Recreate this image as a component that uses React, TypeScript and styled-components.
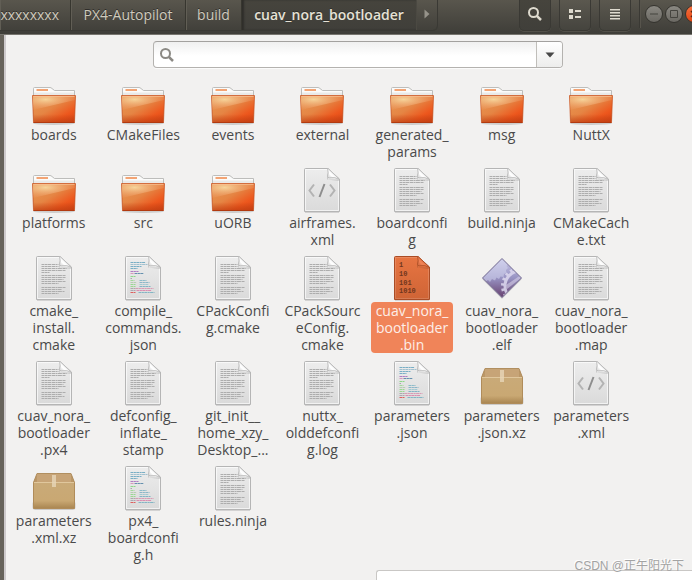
import React from "react";
import styled, { createGlobalStyle, css } from "styled-components";

const GlobalStyle = createGlobalStyle`
  * { box-sizing: border-box; }
  body {
    margin: 0;
    overflow: hidden;
    font-family: "Open Sans", "Noto Sans", sans-serif;
    font-size: 14px;
    color: #4a4a4a;
  }
  button { font: inherit; color: inherit; border: 0; background: none; padding: 0; }
`;

const Window = styled.div`
  min-height: 100vh;
  display: flex;
  flex-direction: column;
  position: relative;
  overflow: hidden;
  background: #f2f1f0;
`;

const HeaderBar = styled.header`
  height: 35px;
  display: flex;
  align-items: flex-start;
  overflow: hidden;
  background: linear-gradient(#59564d, #3f3e39 33px);
  border-bottom: 1px solid #77756f;
`;

const PathBar = styled.nav`
  display: flex;
  height: 31px;
  border-bottom: 1px solid #3a3934;
  border-radius: 0 0 5px 0;
  flex: none;
`;

const Crumb = styled.button<{ $active?: boolean; $width: number }>`
  width: ${(p) => p.$width}px;
  height: 30px;
  padding-bottom: 2px;
  display: flex;
  align-items: center;
  justify-content: center;
  white-space: nowrap;
  color: #cfcabd;
  text-shadow: 0 -1px #2e2d2a;
  border-right: 1px solid #37362f;
  box-shadow: inset 1px 0 #615e55;
  ${(p) =>
    p.$active &&
    css`
      color: #e6e2d6;
      font-weight: 600;
      background: linear-gradient(#46443d, #403f3a);
      border-right-color: #4b4942;
      box-shadow: inset 2px 0 2px #2f2e2a;
    `}
`;

const CrumbTail = styled(Crumb)`
  justify-content: flex-end;
  padding-right: 11px;
`;

const CrumbNext = styled.button`
  width: 21px;
  height: 30px;
  padding-bottom: 2px;
  display: flex;
  align-items: center;
  justify-content: center;
  border-right: 1px solid #3a3934;
  border-radius: 0 0 5px 0;
`;

const Tools = styled.div`
  flex: none;
  display: flex;
  gap: 8px;
  margin-left: auto;
`;

const ToolButton = styled.button<{ $pressed?: boolean }>`
  width: 32px;
  height: 31px;
  display: flex;
  align-items: center;
  justify-content: center;
  padding-bottom: 3px;
  border: 1px solid #3a3934;
  border-top: 0;
  border-radius: 0 0 5px 5px;
  background: ${(p) =>
    p.$pressed ? "linear-gradient(#46443d, #403f3a)" : "linear-gradient(#5b584f, #45443e)"};
  box-shadow: 0 1px #53514a;
`;

const WindowControls = styled.div`
  flex: none;
  display: flex;
  gap: 2px;
  height: 28px;
  align-items: center;
  margin-left: 8px;
  margin-right: -11px;
  padding-left: 5px;
  border-left: 1px solid #3a3934;
  box-shadow: inset 1px 0 #57544c;
`;

const ControlButton = styled.button<{ $close?: boolean }>`
  width: 18px;
  height: 18px;
  display: flex;
  align-items: center;
  justify-content: center;
  border: 1px solid #35342f;
  border-radius: 50%;
  background: ${(p) =>
    p.$close ? "linear-gradient(#f6703f, #de4513)" : "linear-gradient(#8a8882, #6b6963)"};
`;

const Content = styled.main`
  flex: 1;
  border-left: 4px solid #66625a;
  box-shadow: inset 2px 0 #cdc9cb;
  padding: 6px 56px 8px 5px;
`;

const SearchForm = styled.form`
  display: flex;
  height: 27px;
  margin: 0 73px 10px 144px;
  border: 1px solid #b4b2af;
  border-top-color: #a3a19f;
  border-radius: 4px;
  background: linear-gradient(#f0f0f0, #ffffff 14px);
  box-shadow: 0 1px #fbfbfb;
  overflow: hidden;
`;

const SearchLabel = styled.label`
  flex: 1;
  display: flex;
  align-items: center;
  gap: 6px;
  padding-left: 5px;
`;

const SearchInput = styled.input`
  flex: 1;
  min-width: 0;
  border: 0;
  outline: 0;
  background: transparent;
  font: inherit;
`;

const SearchMenu = styled.button`
  width: 26px;
  display: flex;
  align-items: center;
  justify-content: center;
  border-left: 1px solid #c0beba;
  background: linear-gradient(#ffffff, #ededec);
`;

const FileGrid = styled.ul`
  list-style: none;
  margin: 0;
  padding: 0;
  display: grid;
  grid-template-columns: repeat(7, minmax(0, 1fr));
  row-gap: 6px;
`;

const FileCell = styled.li`
  display: flex;
  justify-content: center;
`;

const FileButton = styled.button`
  width: 82px;
  min-height: 82px;
  display: flex;
  flex-direction: column;
  align-items: center;
  justify-content: flex-start;
  svg { display: block; flex: none; }
`;

const FileName = styled.span<{ $selected?: boolean }>`
  width: 82px;
  line-height: 17px;
  white-space: pre;
  text-align: center;
  display: flex;
  justify-content: center;
  ${(p) =>
    p.$selected &&
    css`
      color: #fdeee8;
      background: #f08459;
      border-radius: 4px;
    `}
`;

const StatusPopup = styled.div`
  position: absolute;
  right: 0;
  bottom: 0;
  width: 316px;
  height: 10px;
  background: #ffffff;
  border: 1px solid #c9c7c5;
  border-width: 1px 0 0 1px;
  border-radius: 3px 0 0 0;
`;

const Watermark = styled.div`
  position: absolute;
  right: 8px;
  bottom: 5px;
  font-family: "Liberation Sans", "Noto Sans CJK SC", sans-serif;
  font-size: 12px;
  line-height: 18px;
  color: #a3a3a3;
  text-shadow: -1px -1px #ffffff;
`;

type Kind = "folder" | "text" | "code" | "xml" | "bin" | "elf" | "package";

const PAGE = "M7.5 2.5H30L41.5 13V45.5H6.5V3.5Q6.5 2.5 7.5 2.5Z";

function FolderIcon() {
  const id = React.useId();
  return (
    <svg width="48" height="48" viewBox="0 0 48 48" aria-hidden="true">
      <defs>
        <linearGradient id={id + "a"} x1="0" y1="0" x2="1" y2="1">
          <stop offset="0" stopColor="#e89a54" />
          <stop offset="0.45" stopColor="#e58544" />
          <stop offset="0.75" stopColor="#ed571d" />
          <stop offset="1" stopColor="#d54415" />
        </linearGradient>
        <radialGradient id={id + "b"} cx="0.3" cy="0.25" r="0.75">
          <stop offset="0" stopColor="#f6d49a" />
          <stop offset="1" stopColor="#f0a070" stopOpacity="0.15" />
        </radialGradient>
        <linearGradient id={id + "c"} x1="0" y1="0" x2="0" y2="1">
          <stop offset="0.7" stopColor="#b93c10" stopOpacity="0" />
          <stop offset="1" stopColor="#b93c10" stopOpacity="0.6" />
        </linearGradient>
      </defs>
      <ellipse cx="24" cy="45.5" rx="21" ry="1.5" fill="#000" opacity="0.15" />
      <path d="M3.5 43V10.5Q3.5 9.5 4.5 9.5H20Q21 9.5 22 10.5L24.5 12.5H44.5V43Z" fill="#fbfbfa" stroke="#bdbdbb" />
      <path d="M4 14.5H44V17H4Z" fill="#e2e2e0" opacity="0.7" />
      <path d="M6.5 12H18" stroke="#f3a474" strokeWidth="2" />
      <path d="M2.5 17.5H45.5L44.5 44.5H3.5Z" fill={`url(#${id}a)`} stroke="#c8511f" strokeOpacity="0.75" />
      <path d="M3 18H45L44.8 22L3 32Z" fill={`url(#${id}b)`} />
      <path d="M3 18H45L44 44H4Z" fill={`url(#${id}c)`} />
      <path d="M3.5 18.5H44.5" stroke="#f9c193" strokeOpacity="0.7" />
      <path d="M3.5 44.5H44.5" stroke="#b23a10" />
    </svg>
  );
}

function Page({ tint, children }: { tint?: boolean; children: React.ReactNode }) {
  const id = React.useId();
  return (
    <svg width="48" height="48" viewBox="0 0 48 48" aria-hidden="true">
      <defs>
        <linearGradient id={id + "p"} x1="0" y1="0" x2="0" y2="1">
          <stop offset="0" stopColor={tint ? "#e77542" : "#ededed"} />
          <stop offset="1" stopColor={tint ? "#cf6436" : "#dadada"} />
        </linearGradient>
        <linearGradient id={id + "f"} x1="0" y1="1" x2="1" y2="0">
          <stop offset="0" stopColor={tint ? "#b8562d" : "#bdbdbd"} />
          <stop offset="0.35" stopColor={tint ? "#f08355" : "#ffffff"} />
          <stop offset="1" stopColor={tint ? "#d96939" : "#e4e4e4"} />
        </linearGradient>
      </defs>
      <path d="M7 46.5H41" stroke="#000" opacity="0.12" />
      <path d={PAGE} fill={`url(#${id}p)`} stroke={tint ? "#aa4c25" : "#b5b5b5"} />
      <path d="M7.5 3.5H29.5M7.5 3.5V44.5H40.5V13.5" fill="none" stroke="#fff" opacity={tint ? 0.15 : 0.65} />
      {children}
      <path d="M30 11V13.5H41V15L29 13.5V4Z" fill="#000" opacity="0.13" />
      <path d="M29.5 2.5Q31 7 29.5 10.5Q29.5 12 31.5 11.8Q37 10.5 41.5 13.5L30 2.5Z" fill={`url(#${id}f)`} stroke={tint ? "#aa4c25" : "#b5b5b5"} strokeWidth="0.8" />
    </svg>
  );
}

const TEXT_LINES: [number, number][] = [
  [10.5, 17], [12.5, 17], [14.5, 25], [16.5, 24], [18.5, 8],
  [21.5, 24], [23.5, 24], [25.5, 22], [27.5, 24], [29.5, 17],
  [33.5, 24], [35.5, 20], [37.5, 23], [39.5, 17],
];

const CODE_MARKS: [number, number, number, string][] = [
  [11.5, 8.5, 15, "#78aec5"], [11.5, 10.5, 17, "#a1c0cf"], [11.5, 12.5, 11, "#78aec5"], [11.5, 14.5, 7, "#78aec5"],
  [11.5, 17.5, 8, "#b07bc3"], [15.5, 19.5, 9, "#6590ae"], [11.5, 19.5, 4, "#d898bd"],
  [11.5, 22.5, 5, "#8dd888"], [11.5, 24.5, 1.5, "#a9a9a9"],
  [11.5, 26.5, 4, "#a2d99c"], [20.5, 26.5, 7, "#8bbbc9"],
  [11.5, 28.5, 6, "#b7ccb2"], [20.5, 28.5, 10, "#8bb6c8"],
  [11.5, 30.5, 5, "#9bd893"], [20.5, 30.5, 9, "#a2c9d2"],
  [11.5, 32.5, 5, "#9bd893"], [20.5, 32.5, 11, "#83b4c5"],
  [11.5, 34.5, 5, "#ababab"], [16.5, 34.5, 18, "#d89bb5"],
  [11.5, 36.5, 5, "#aaa9b2"], [17.5, 36.5, 15, "#db8db0"],
  [11.5, 38.5, 5, "#dd5f5e"], [19.5, 38.5, 16, "#83b5c4"],
];

const TextIcon = () => (
  <Page>
    {TEXT_LINES.map(([y, w]) => (
      <path key={y} d={`M11.5 ${y}h${w}`} stroke="#adadad" strokeDasharray="3 0.5 2 0.4 4 0.6" />
    ))}
  </Page>
);

const CodeIcon = () => (
  <Page>
    {CODE_MARKS.map(([x, y, w, c]) => (
      <path key={`${x}-${y}`} d={`M${x} ${y}h${w}`} stroke={c} strokeDasharray="3 0.4 2 0.4" />
    ))}
  </Page>
);

const XmlIcon = () => (
  <Page>
    <path d="M16 18.5L11.5 24.5L16 30.5M32 18.5L36.5 24.5L32 30.5" fill="none" stroke="#b3b3b3" strokeWidth="2" />
    <path d="M26.5 18L21.5 31" stroke="#8e8e8e" strokeWidth="2" />
  </Page>
);

const BinIcon = () => (
  <Page tint>
    <g fill="#71361d" fontFamily="Liberation Mono, monospace" fontWeight="700" fontSize="7">
      <text x="11" y="13">1</text>
      <text x="11" y="22">10</text>
      <text x="11" y="31">101</text>
      <text x="11" y="39">1010</text>
    </g>
  </Page>
);

function ElfIcon() {
  const id = React.useId();
  return (
    <svg width="48" height="48" viewBox="0 0 48 48" aria-hidden="true">
      <defs>
        <linearGradient id={id + "d"} x1="0" y1="0" x2="0" y2="1">
          <stop offset="0" stopColor="#c9c8e8" />
          <stop offset="0.5" stopColor="#9893c3" />
          <stop offset="1" stopColor="#67406f" />
        </linearGradient>
        <clipPath id={id + "k"}>
          <path d="M24 4.5L43.5 24L24 43.5L4.5 24Z" />
        </clipPath>
      </defs>
      <path d="M24 7L43.5 25.5L24 45L4.5 25.5Z" fill="#000" opacity="0.13" />
      <path d="M24 4.5L43.5 24L24 43.5L4.5 24Z" fill={`url(#${id}d)`} />
      <g clipPath={`url(#${id}k)`}>
        <path d="M3 24L24 3L30 10L28.5 12L30 14L28 16L28.5 19L26 20L25.5 23L22.5 22.5L21 25L18.5 23.5L17 26.5L14 25L12 28L10 26L7 28Z" fill="#d8d9f1" opacity="0.5" />
        <circle cx="42" cy="32" r="15" fill="none" stroke="#ddd8ee" strokeWidth="3" opacity="0.85" />
        <circle cx="42" cy="32" r="17.5" fill="none" stroke="#ddd8ee" strokeWidth="3" strokeDasharray="2.5 3" opacity="0.85" />
        <path d="M28 31L43 21V24L29 35Z" fill="#d5cfe7" opacity="0.6" />
      </g>
      <path d="M24 4.5L43.5 24L24 43.5L4.5 24Z" fill="none" stroke="#756c91" strokeLinejoin="round" />
    </svg>
  );
}

function PackageIcon() {
  const id = React.useId();
  return (
    <svg width="48" height="48" viewBox="0 0 48 48" aria-hidden="true">
      <defs>
        <linearGradient id={id + "b"} x1="0" y1="0" x2="0" y2="1">
          <stop offset="0" stopColor="#c9aa78" />
          <stop offset="0.7" stopColor="#c9a873" />
          <stop offset="1" stopColor="#a98551" />
        </linearGradient>
      </defs>
      <rect x="2.5" y="37" width="43" height="9" rx="3" fill="#000" opacity="0.16" />
      <path d="M7 9.5H41L44.5 18.5H3.5Z" fill="#c7a477" stroke="#b18f60" />
      <path d="M7 10V18H3.5ZM41 10V18H44.5Z" fill="#ad8755" opacity="0.45" />
      <path d="M3.5 18.5H44.5V44.5H3.5Z" fill={`url(#${id}b)`} stroke="#b08c5a" />
      <path d="M4 18.5H44" stroke="#e0c79d" />
      <path d="M22 11H26V23H22Z" fill="#e7d6b8" opacity="0.8" />
    </svg>
  );
}

const ICONS: Record<Kind, React.ComponentType> = {
  folder: FolderIcon,
  text: TextIcon,
  code: CodeIcon,
  xml: XmlIcon,
  bin: BinIcon,
  elf: ElfIcon,
  package: PackageIcon,
};

const FILES: [Kind, string][] = [
  ["folder", "boards"],
  ["folder", "CMakeFiles"],
  ["folder", "events"],
  ["folder", "external"],
  ["folder", "generated_\nparams"],
  ["folder", "msg"],
  ["folder", "NuttX"],
  ["folder", "platforms"],
  ["folder", "src"],
  ["folder", "uORB"],
  ["xml", "airframes.\nxml"],
  ["text", "boardconfi\ng"],
  ["text", "build.ninja"],
  ["text", "CMakeCach\ne.txt"],
  ["text", "cmake_\ninstall.\ncmake"],
  ["code", "compile_\ncommands.\njson"],
  ["text", "CPackConfi\ng.cmake"],
  ["text", "CPackSourc\neConfig.\ncmake"],
  ["bin", "cuav_nora_\nbootloader\n.bin"],
  ["elf", "cuav_nora_\nbootloader\n.elf"],
  ["text", "cuav_nora_\nbootloader\n.map"],
  ["text", "cuav_nora_\nbootloader\n.px4"],
  ["text", "defconfig_\ninflate_\nstamp"],
  ["text", "git_init__\nhome_xzy_\nDesktop_..."],
  ["text", "nuttx_\nolddefconfi\ng.log"],
  ["code", "parameters\n.json"],
  ["package", "parameters\n.json.xz"],
  ["xml", "parameters\n.xml"],
  ["package", "parameters\n.xml.xz"],
  ["code", "px4_\nboardconfi\ng.h"],
  ["text", "rules.ninja"],
];

const Magnifier = ({ color }: { color: string }) => (
  <svg width="16" height="16" viewBox="0 0 16 16" fill="none" stroke={color} aria-hidden="true">
    <circle cx="6.5" cy="6.5" r="4.5" strokeWidth="2" />
    <path d="M9.8 9.8L14 14" strokeWidth="2.5" />
  </svg>
);

export default function App() {
  return (
    <Window>
      <GlobalStyle />
      <HeaderBar>
        <PathBar aria-label="Path">
          <CrumbTail $width={71}>xxxxxxxx</CrumbTail>
          <Crumb $width={115}>PX4-Autopilot</Crumb>
          <Crumb $width={56}>build</Crumb>
          <Crumb $width={175} $active aria-current="page">cuav_nora_bootloader</Crumb>
          <CrumbNext aria-label="Next folder">
            <svg width="6" height="10" viewBox="0 0 6 10"><path d="M0.5 0.5L5.5 5L0.5 9.5Z" fill="#96938a" /></svg>
          </CrumbNext>
        </PathBar>
        <Tools>
          <ToolButton $pressed aria-label="Search">
            <Magnifier color="#dedace" />
          </ToolButton>
          <ToolButton aria-label="List view">
            <svg width="14" height="12" viewBox="0 0 14 12" fill="#dedace">
              <path d="M1 1h4v4H1zM1 7h4v4H1zM7 2h6v2H7zM7 8h6v2H7z" />
            </svg>
          </ToolButton>
          <ToolButton aria-label="Menu">
            <svg width="12" height="12" viewBox="0 0 12 12" fill="#dedace">
              <path d="M1 1h10v1.5H1zM1 4h10v1.5H1zM1 7h10v1.5H1zM1 10h10v1.5H1z" />
            </svg>
          </ToolButton>
        </Tools>
        <WindowControls>
          <ControlButton aria-label="Minimize">
            <svg width="8" height="8" viewBox="0 0 8 8"><path d="M0 4h8" stroke="#45443f" /></svg>
          </ControlButton>
          <ControlButton aria-label="Maximize">
            <svg width="8" height="8" viewBox="0 0 8 8"><path d="M0.5 0.5h7v7h-7z" fill="none" stroke="#45443f" /></svg>
          </ControlButton>
          <ControlButton $close aria-label="Close">
            <svg width="8" height="8" viewBox="0 0 8 8"><path d="M1 1l6 6M7 1L1 7" stroke="#5b2310" strokeWidth="1.5" /></svg>
          </ControlButton>
        </WindowControls>
      </HeaderBar>
      <Content>
        <SearchForm>
          <SearchLabel>
            <Magnifier color="#8b8984" />
            <SearchInput type="text" aria-label="Search files" />
          </SearchLabel>
          <SearchMenu type="button" aria-label="Search options">
            <svg width="10" height="6" viewBox="0 0 10 6"><path d="M0.5 0.5H9.5L5 5.5Z" fill="#484848" /></svg>
          </SearchMenu>
        </SearchForm>
        <FileGrid>
          {FILES.map(([kind, name]) => {
            const Icon = ICONS[kind];
            return (
              <FileCell key={name}>
                <FileButton>
                  <Icon />
                  <FileName $selected={kind === "bin"}>{name}</FileName>
                </FileButton>
              </FileCell>
            );
          })}
        </FileGrid>
      </Content>
      <StatusPopup />
      <Watermark>CSDN @正午阳光下</Watermark>
    </Window>
  );
}
